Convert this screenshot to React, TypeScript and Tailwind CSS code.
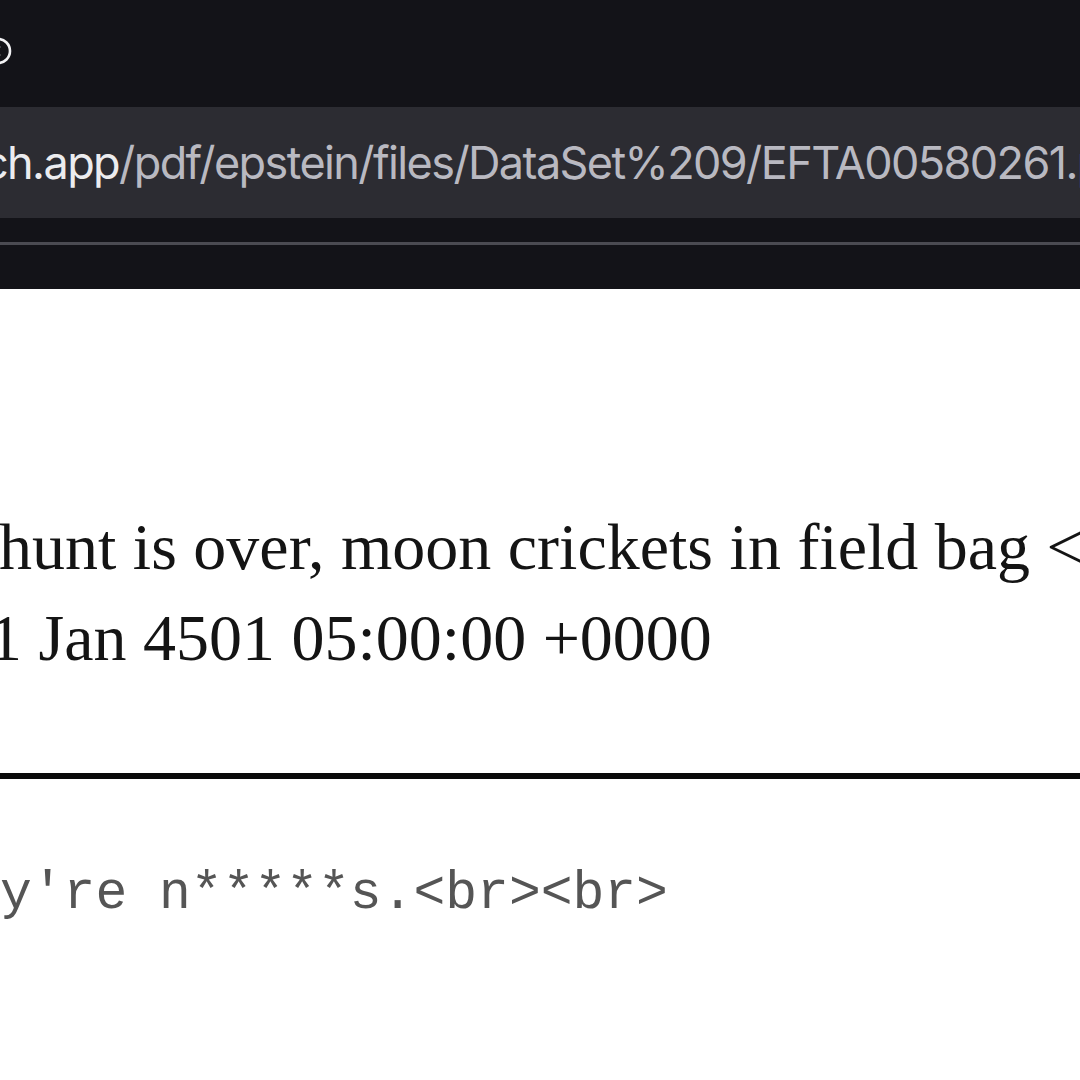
import React from "react";

function SiteInfoIcon() {
  return (
    <svg width="28" height="30" viewBox="0 0 28 30" fill="none" stroke="#f2f2f4" strokeWidth="2.6" strokeLinecap="round">
      <circle cx="13" cy="15" r="12" />
      <path d="M4 11h10" />
      <path d="M4 19h10" />
      <path d="M12 8v6" />
    </svg>
  );
}

function BrowserChrome() {
  return (
    <div className="h-[289px] bg-[#131318] flex flex-col overflow-hidden">
      <div className="h-[107px] flex items-start pt-[36px]">
        <div className="-ml-[15px]">
          <SiteInfoIcon />
        </div>
      </div>
      <div className="h-[111px] bg-[#2c2c32] flex items-center overflow-hidden whitespace-nowrap">
        <span className="-ml-[17px] text-[45px] tracking-[-1.6px] font-['Inter',sans-serif] leading-none">
          <span className="text-[#ececef]">ch.app</span>
          <span className="text-[#b9b9c1]">/pdf/epstein/files/DataSet%209/EFTA00580261.pdf</span>
        </span>
      </div>
      <div className="h-[24px]" />
      <div className="h-[3px] bg-[#4b4b52]" />
    </div>
  );
}

function PdfPage() {
  return (
    <div className="bg-white pt-[212px] overflow-hidden whitespace-nowrap">
      <div className="font-['Liberation_Serif','Times_New_Roman',serif] text-[66px] leading-[91px] text-[#141414]">
        <div className="-ml-[1px]">hunt is over, moon crickets in field bag &lt;br&gt;</div>
        <div className="-ml-[11px]">1 Jan 4501 05:00:00 +0000</div>
      </div>
      <div className="mt-[90px] h-[6px] bg-[#0a0a0a]" />
      <div className="mt-[86px] font-['Liberation_Mono','Courier_New',monospace] text-[53px] leading-[59px] text-[#555555]">
        y're n*****s.&lt;br&gt;&lt;br&gt;
      </div>
      <div className="h-[160px]" />
    </div>
  );
}

export default function App() {
  return (
    <div className="w-[1080px] h-[1080px] overflow-hidden bg-white">
      <BrowserChrome />
      <PdfPage />
    </div>
  );
}
